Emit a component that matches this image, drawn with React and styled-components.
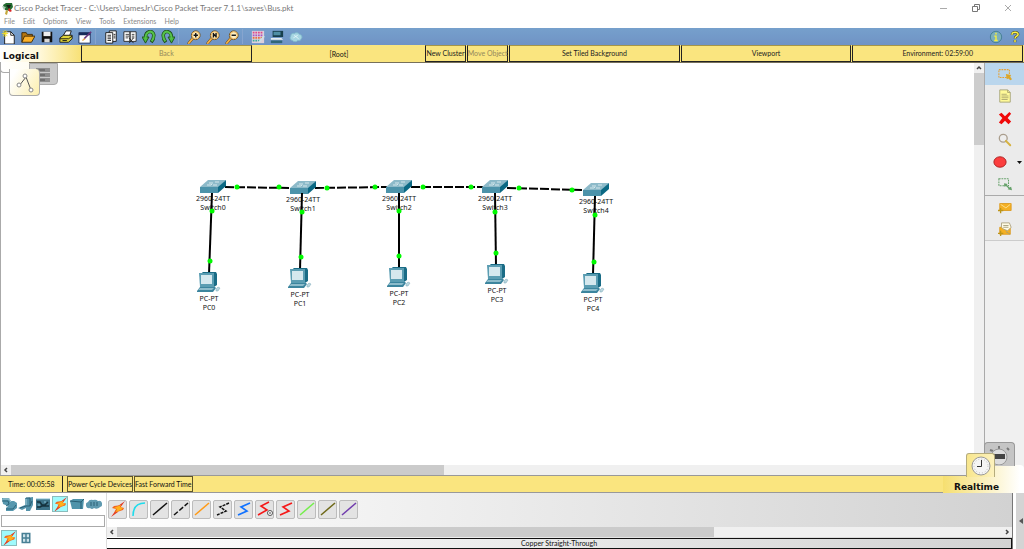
import React from "react"
import styled, { createGlobalStyle } from "styled-components"

const switches = [
    { name: "Switch0", x: 213, y: 124 },
    { name: "Switch1", x: 303, y: 125 },
    { name: "Switch2", x: 399, y: 124 },
    { name: "Switch3", x: 495, y: 124 },
    { name: "Switch4", x: 596, y: 127 },
]

const pcs = [
    { name: "PC0", x: 209, y: 220 },
    { name: "PC1", x: 300, y: 216 },
    { name: "PC2", x: 399, y: 215 },
    { name: "PC3", x: 497, y: 212 },
    { name: "PC4", x: 593, y: 221 },
]

const trunks = [
    [225, 124, 290, 125],
    [315, 125, 387, 124],
    [411, 124, 483, 124],
    [507, 125, 584, 127],
]

const drops = [
    [212, 130, 209, 211],
    [302, 130, 300, 207],
    [399, 130, 399, 206],
    [495, 130, 496, 203],
    [595, 133, 593, 212],
]

const ports = [
    [237, 124], [279, 124], [327, 125], [375, 124], [423, 124], [471, 124], [519, 125], [572, 127],
    [212, 148], [210, 198], [302, 149], [301, 194], [399, 148], [399, 193],
    [495, 149], [496, 190], [595, 152], [594, 199],
]

const cables = [
    { name: "Automatic", kind: "auto" },
    { name: "Console", kind: "arc", color: "#1fdcec" },
    { name: "Copper Straight-Through", kind: "line", color: "#111" },
    { name: "Copper Cross-Over", kind: "dash", color: "#111" },
    { name: "Fiber", kind: "line", color: "#ff9a16" },
    { name: "Phone", kind: "zigdash", color: "#111" },
    { name: "Coaxial", kind: "zig", color: "#1172ff" },
    { name: "Serial DCE", kind: "clock", color: "#f51919" },
    { name: "Serial DTE", kind: "zig", color: "#f51919" },
    { name: "Octal", kind: "line", color: "#74ee4c" },
    { name: "IoT Custom", kind: "line", color: "#6e6818" },
    { name: "USB", kind: "line", color: "#713cad" },
]

/* ---------- drawings ---------- */

const Svg = ({ s = 14, children }) => (
    <svg width={s} height={s} viewBox="0 0 16 16" fill="none" aria-hidden="true">{children}</svg>
)

const Bolt = ({ s = 16 }) => (
    <Svg s={s}>
        <path d="M15 0 10 7 8 5zM1 16l5-7 2 2z" fill="#e03a26" />
        <path d="M12 4 4 5 2 7l4 1-2 4 9-3 1-2-4-1z" fill="#f4631c" />
        <path d="m11 4-5 2-2 1 3 1-1 3 5-2 2-2-3-1z" fill="#ffb01a" />
    </Svg>
)

const Magnifier = ({ mark }) => (
    <Svg>
        <path d="m7 9-5 6" stroke="#6b4712" strokeWidth="3" strokeLinecap="round" />
        <path d="m7 9-5 6" stroke="#f0b04a" strokeWidth="2" strokeLinecap="round" />
        <circle cx="10" cy="6" r="5" fill="#fdf1c8" stroke="#6b4a18" />
        <circle cx="10" cy="6" r="4" stroke="#f2b552" />
        <path d={mark} stroke="#111" strokeWidth="1.600" />
    </Svg>
)

const Arc = ({ flip }) => (
    <Svg>
        <g transform={flip ? "translate(16 0) scale(-1 1)" : undefined}>
            <path d="M4 9C4 0 13 0 13.500 6c0 3-.5 5-3 8" stroke="#1c4d18" strokeWidth="4" />
            <path d="M0 8h8l-4 7z" fill="#4cbb40" stroke="#1c4d18" />
            <path d="M4 10C4 0 13 0 13.500 6c0 3-.5 5-2.500 7" stroke="#56c24a" strokeWidth="2.400" />
        </g>
    </Svg>
)

const tools = [
    {
        name: "New", art: <Svg>
            <path d="M3 2h7l4 4v10H3z" fill="#fff" stroke="#111" />
            <path d="M10 2v4h4" stroke="#111" />
            <path d="M0 4h7M3.500 0v8M1 1l5 6M6 1 1 7" stroke="#f2df25" />
        </Svg>,
    },
    {
        name: "Open", art: <Svg>
            <path d="M1 14V3h5l1 2h6v3" fill="#b87711" stroke="#3c2604" />
            <path d="m1 14 3-7h12l-4 7z" fill="#fbb12b" stroke="#3c2604" />
        </Svg>,
    },
    {
        name: "Save", art: <Svg>
            <path d="M2 2h12v12H2z" fill="#111" />
            <path d="M4 2h8v5H4z" fill="#eee" />
            <path d="M5 10h6v4H5z" fill="#d8d8d8" />
        </Svg>,
    },
    {
        name: "Print", art: <Svg>
            <path d="m5 6 3-5h6l-2 6z" fill="#fff" stroke="#111" />
            <path d="m1 9 4-3h10v4l-4 4H1z" fill="#ded43b" stroke="#111" />
            <path d="M1 10h10l4-3M4 12h5" stroke="#111" />
        </Svg>,
    },
    {
        name: "Activity Wizard", art: <Svg>
            <path d="M1 3h13v12H1z" fill="#fff" stroke="#162a59" />
            <path d="M1 3h13v3H1z" fill="#162a59" />
            <path d="m7 10 8-8" stroke="#673378" strokeWidth="2" />
            <path d="m5 12 3-2" stroke="#e7a544" strokeWidth="1.500" />
        </Svg>,
    },
    null,
    {
        name: "Copy", art: <Svg>
            <path d="M6 1h8v12H6z" fill="#fff" stroke="#111" />
            <path d="M2 3h8v12H2z" fill="#fff" stroke="#111" />
            <path d="M4 6h4M4 8h4M4 10h4M4 12h4M11 5h2M11 7h2M11 9h2" stroke="#111" />
        </Svg>,
    },
    {
        name: "Paste", art: <Svg>
            <path d="M1 2h7v11H1zM8 2h7v11H8z" fill="#fff" stroke="#222" />
            <path d="M3 5h4M3 7h4M3 9h3M10 5h3M10 7h3M10 9h3" stroke="#333" />
            <path d="m7 9 5 6m0-6-5 6" stroke="#222" />
        </Svg>,
    },
    { name: "Undo", art: <Arc /> },
    { name: "Redo", art: <Arc flip /> },
    null,
    { name: "Zoom In", art: <Magnifier mark="M7.500 6h5M10 3.500v5" /> },
    { name: "Zoom Reset", art: <Magnifier mark="M8.500 3.500v5m3-5v5m-3-4 3 3" /> },
    { name: "Zoom Out", art: <Magnifier mark="M7.500 6h5" /> },
    null,
    {
        name: "Palette", art: <Svg>
            <path d="M1 1h14v14H1z" fill="#dccfdc" />
            <path d="M2 3h12" stroke="#e04888" strokeWidth="2" strokeDasharray="2 1" />
            <path d="M2 6h12" stroke="#b050c0" strokeWidth="2" strokeDasharray="2 1" />
            <path d="M2 9h12" stroke="#e8703c" strokeWidth="2" strokeDasharray="2 1" />
            <path d="M2 12h8" stroke="#3cae9c" strokeWidth="2" strokeDasharray="2 1" />
            <path d="m9 14 6-7" stroke="#cfe0e6" strokeWidth="2" />
        </Svg>,
    },
    {
        name: "Custom Devices", art: <Svg>
            <path d="M3 1h12v7H3z" fill="#183f4c" />
            <path d="M4 2h8v4H4z" fill="#4f8ea4" />
            <path d="M1 9h12l2 2H1z" fill="#e4ecee" />
            <path d="M1 12h13v3H1z" fill="#316779" />
        </Svg>,
    },
    {
        name: "Cloud", art: <Svg>
            <path d="M4 12a3 3 0 0 1-2-5 3 3 0 0 1 4-3 4 4 0 0 1 6 1 3 3 0 0 1 2 5 3 3 0 0 1-4 2 4 4 0 0 1-6 0z" fill="#a6d5e2" stroke="#7fb9ca" />
            <path d="m5 9 5-3M6 6l5 4" stroke="#e3f7fa" />
        </Svg>,
    },
]

const sideTools = [
    {
        name: "Select", active: true, art: <Svg>
            <path d="M1 3h12v9H1z" stroke="#e6a033" strokeWidth="1.200" strokeDasharray="2 1" />
            <path d="m9 8 6 1-1 2 2 3-2 1-2-2-2 1z" fill="#dca72c" />
        </Svg>,
    },
    {
        name: "Place Note", art: <Svg>
            <path d="M2 1h9l3 3v11H2z" fill="#fffa98" stroke="#a2a077" />
            <path d="M11 1v3h3M4 6h6M4 8h8M4 10h8M4 12h7" stroke="#aaa66f" />
        </Svg>,
    },
    {
        name: "Delete", art: <Svg>
            <path d="m1 4 3-2 4 4 5-5 2 2-4 5 4 4-3 3-4-4-4 4-3-2 4-5z" fill="#f00909" />
        </Svg>,
    },
    {
        name: "Inspect", art: <Svg>
            <circle cx="6" cy="6" r="4.500" fill="#eee" stroke="#aa9e8e" strokeWidth="1.500" />
            <path d="m9 9 5 5" stroke="#d6b240" strokeWidth="2.200" strokeLinecap="round" />
        </Svg>,
    },
    {
        name: "Draw", menu: true, art: <Svg>
            <ellipse cx="8" cy="8" rx="7" ry="6" fill="#fb3e3e" stroke="#a81b1b" />
        </Svg>,
    },
    {
        name: "Resize", art: <Svg>
            <path d="M1 2h11v8H1z" stroke="#65a169" strokeWidth="1.200" strokeDasharray="2 1" />
            <path d="m7 7 4 1-1 1 3 3 2-1 1 4-5-1 1-1-3-3-2 1z" fill="#65a169" />
        </Svg>,
    },
    {
        name: "Simple PDU", art: <Svg>
            <path d="M2 4h13v8H2z" fill="#f5b022" stroke="#dc9a20" />
            <path d="m3 5 6 4 5-4" stroke="#fbe49a" />
            <path d="M3 9v6M0 12h6" stroke="#bd9519" strokeWidth="1.500" />
        </Svg>,
    },
    {
        name: "Complex PDU", art: <Svg>
            <path d="M2 6h12v8H2z" fill="#f5b022" stroke="#dc9a20" />
            <path d="M4 1h9l2 5-4 4-5-2-2-2z" fill="#fffbe5" stroke="#aaa07e" />
            <path d="M6 4h6M6 6h6M9 11l5 3" stroke="#a39b79" />
            <path d="M3 10v6M0 13h6" stroke="#bd9519" strokeWidth="1.500" />
        </Svg>,
    },
]

const families = [
    {
        name: "Routers", art: <Svg s={16}>
            <path d="M1 2h7l2 3h3l3 2v5l-4 3H5v-3l2-2-5-2z" fill="#5797ae" />
            <path d="M1 5h6l1 3-3 2M5 13h7l3-4" stroke="#2c647a" />
            <path d="M2 3h6l2 3" stroke="#a5cbd7" />
        </Svg>,
    },
    {
        name: "Switches", art: <Svg s={16}>
            <path d="m7 2 8-1v8l-3 6H8v-3l-4 2-4-2 7-3z" fill="#5593aa" />
            <path d="M8 2h4v8M2 12l6-2h4l2-5" stroke="#2a6077" />
            <path d="M8 3v6" stroke="#a5cbd7" />
        </Svg>,
    },
    {
        name: "Hubs", art: <Svg s={16}>
            <path d="M1 3h14v11H1z" fill="#3c7288" />
            <path d="M2 6h3l2 3h3l3-3M2 11h3l2-1h7" stroke="#15323e" strokeWidth="1.500" />
            <path d="M1 3h14M9 6h2M3 9h2" stroke="#83bed1" />
        </Svg>,
    },
    { name: "Connections", active: true, art: <Bolt s={15} /> },
    {
        name: "End Devices", art: <Svg s={16}>
            <path d="m1 5 3-2h11l-1 10H3z" fill="#4e93aa" />
            <path d="m1 5 11 1 3-3M12 6v7" stroke="#285f74" />
        </Svg>,
    },
    {
        name: "Cloud", art: <Svg s={16}>
            <path d="M4 12a3 3 0 0 1-2-6 4 3 0 0 1 5-2 4 3 0 0 1 5 1 3 3 0 0 1 2 6 4 3 0 0 1-6 1 3 3 0 0 1-4 0z" fill="#5f9ab0" />
            <path d="M4 7h8M4 9h8" stroke="#2c6177" strokeDasharray="2 1" />
        </Svg>,
    },
]

function CableArt({ kind, color }) {
    if (kind === "auto") return <Bolt />
    return (
        <Svg s={16}>
            {kind === "line" && <path d="M1 14 15 2" stroke={color} strokeWidth="1.500" />}
            {kind === "dash" && <path d="M1 14 15 2" stroke={color} strokeWidth="1.500" strokeDasharray="5 2" />}
            {kind === "arc" && <path d="M2 15C2 7 6 2 14 2" stroke={color} strokeWidth="1.500" />}
            {kind === "zig" && <path d="M14 2 5 6l6 4-9 4" stroke={color} strokeWidth="1.600" />}
            {kind === "zigdash" && <path d="M14 2 5 6l6 4-9 4" stroke={color} strokeWidth="1.500" strokeDasharray="3 1" />}
            {kind === "clock" && <>
                <path d="M12 1 4 5l6 4-9 5" stroke={color} strokeWidth="1.600" />
                <circle cx="13" cy="12" r="2.500" fill="#fff" stroke="#555" />
                <path d="M12 12h2" stroke="#444" />
            </>}
        </Svg>
    )
}

const SwitchArt = () => (
    <svg width="28" height="14" viewBox="0 0 28 14" aria-hidden="true">
        <path d="M1 7 9 0h18l-7 7z" fill="#8dbac9" />
        <path d="M1 7h18v6H1z" fill="#4c93aa" />
        <path d="m19 7 8-7v6l-8 7z" fill="#0b6984" />
        <path d="M8 5h4l1-1m3-2h4M10 3h4m0 2h4" stroke="#d4e7ec" fill="none" />
    </svg>
)

const PcArt = () => (
    <svg width="24" height="20" viewBox="0 0 24 20" aria-hidden="true">
        <path d="M5 0h14l1 2v11l-3 2z" fill="#1a6c86" />
        <path d="M2 1h15v14H3z" fill="#5b9db2" />
        <path d="M4 3h11v9H4z" fill="#d5e8ee" />
        <path d="M3 15h15l1 1-3 4H0v-1z" fill="#3c859e" />
        <path d="M3 16h14l-2 2H1z" fill="#8dbccb" />
        <path d="m19 17 2-2 2 1-2 3h-2z" fill="#bcd7df" stroke="#7aa9b8" strokeWidth=".5" />
    </svg>
)

/* ---------- page ---------- */

export default function App() {
    return (
        <Window>
            <Global />
            <TitleBar>
                <svg width="12" height="13" viewBox="0 0 12 13" aria-hidden="true">
                    <path d="M1 3 4 1l6 0 1 4-3 4-5-1z" fill="#236b31" />
                    <path d="M4 3h5l-2 4z" fill="#151f16" />
                    <path d="m7 6 3 3-2 1-2-2" fill="#db2626" />
                    <path d="m4 8 2 1-1 4-2-1z" fill="#c5a83c" />
                    <path d="m0 4 4 1-2 3z" fill="#a6c7b0" />
                </svg>
                <Title>Cisco Packet Tracer - C:\Users\JamesJr\Cisco Packet Tracer 7.1.1\saves\Bus.pkt</Title>
                <WinButton aria-label="Minimize"><svg width="8" height="8"><path d="M0 4.500h7" stroke="#aaa" /></svg></WinButton>
                <WinButton aria-label="Restore"><svg width="8" height="8" fill="none" stroke="#777"><path d="M.5 2.500h5v5h-5zM2.500 2V.5h5v5H6" /></svg></WinButton>
                <WinButton aria-label="Close"><svg width="8" height="8"><path d="m1 1 6 6m0-6-6 6" stroke="#aaa" /></svg></WinButton>
            </TitleBar>

            <MenuBar>
                {["File", "Edit", "Options", "View", "Tools", "Extensions", "Help"].map(m => <MenuItem key={m}>{m}</MenuItem>)}
            </MenuBar>

            <ToolBar>
                {tools.map((t, i) => t
                    ? <ToolButton key={t.name} aria-label={t.name}>{t.art}</ToolButton>
                    : <ToolGap key={i} />
                )}
                <Spacer />
                <ToolButton aria-label="Info">
                    <Svg>
                        <circle cx="8" cy="8" r="6.500" fill="#7cafbd" stroke="#417b91" />
                        <path d="M6 7h2v5M6 12h4M8 3v2" stroke="#f7ef3c" strokeWidth="1.600" />
                    </Svg>
                </ToolButton>
                <ToolButton aria-label="Help">
                    <Svg s={12}>
                        <path d="M4 5c0-5 9-4 8 0-.5 2-4 2-4 5m0 2v3" stroke="#4e4b20" strokeWidth="3.500" />
                        <path d="M4 5c0-5 9-4 8 0-.5 2-4 2-4 5m0 2v3" stroke="#fbf34a" strokeWidth="2" />
                    </Svg>
                </ToolButton>
            </ToolBar>

            <NavBar>
                <LogicalTab>Logical</LogicalTab>
                <NavButton $grow={171} disabled>Back</NavButton>
                <NavLabel $grow={175}>[Root]</NavLabel>
                <NavButton $grow={39}>New Cluster</NavButton>
                <NavButton $grow={40} disabled>Move Object</NavButton>
                <NavButton $grow={171}>Set Tiled Background</NavButton>
                <NavButton $grow={171}>Viewport</NavButton>
                <NavButton $grow={171}>Environment: 02:59:00</NavButton>
            </NavBar>

            <Main>
                <View>
                    <Canvas>
                        <Links>
                            {trunks.map(([a, b, c, d]) => <line key={a} x1={a} y1={b} x2={c} y2={d} stroke="#000" strokeWidth="2" strokeDasharray="9 2" />)}
                        </Links>
                        {switches.map(n => (
                            <Node key={n.name} style={{ left: n.x, top: n.y }}>
                                <SwitchArt />
                                <NodeText>2960-24TT<br />{n.name}</NodeText>
                            </Node>
                        ))}
                        <Links>
                            {drops.map(([a, b, c, d]) => <line key={a} x1={a} y1={b} x2={c} y2={d} stroke="#000" strokeWidth="2" />)}
                            {ports.map(([x, y]) => <circle key={x + "-" + y} cx={x} cy={y} r="2.500" fill="#00fa00" />)}
                        </Links>
                        {pcs.map(n => (
                            <Node key={n.name} $pc style={{ left: n.x, top: n.y }}>
                                <PcArt />
                                <NodeText>PC-PT<br />{n.name}</NodeText>
                            </Node>
                        ))}
                    </Canvas>
                    <VScroll>
                        <Arrow dir="up" />
                        <VThumb />
                    </VScroll>
                    <HScroll>
                        <Arrow dir="left" />
                        <HThumb $size="44%" />
                    </HScroll>
                </View>
                <SideBar>
                    <SideTools>
                        {sideTools.map((t, i) => (
                            <React.Fragment key={t.name}>
                                {i === 6 && <Rule />}
                                <SideButton aria-label={t.name} $active={t.active} $menu={t.menu}>
                                    {t.art}
                                    {t.menu && <svg width="5" height="3" aria-hidden="true"><path d="M0 0h5L2.500 3z" fill="#111" /></svg>}
                                </SideButton>
                            </React.Fragment>
                        ))}
                    </SideTools>
                </SideBar>
                <LogicalCorner>
                    <PhysicalTab aria-label="Physical workspace">
                        <svg width="18" height="18" aria-hidden="true">
                            <path d="M2 2h14v4H2zM2 7h14v4H2zM2 12h14v4H2z" fill="#8f8f8f" />
                            <path d="M2 4h9M2 9h9M2 14h9" stroke="#707070" strokeWidth="2" />
                        </svg>
                    </PhysicalTab>
                    <LogicalIcon aria-label="Logical workspace">
                        <svg width="20" height="22" fill="#fff" stroke="#888" aria-hidden="true">
                            <path d="m4 15 7-9 5 13" fill="none" stroke="#555" />
                            <circle cx="4" cy="14" r="2" />
                            <circle cx="10" cy="5" r="2" />
                            <circle cx="16" cy="19" r="2" />
                        </svg>
                    </LogicalIcon>
                </LogicalCorner>
            </Main>

            <TimeBar>
                <Clock>Time: 00:05:58</Clock>
                <TimeButton>Power Cycle Devices</TimeButton>
                <TimeButton>Fast Forward Time</TimeButton>
                <RealtimeTab>Realtime</RealtimeTab>
                <SimulationIcon aria-label="Simulation">
                    <svg width="28" height="20" aria-hidden="true">
                        <path d="M14 1v3M5 5l3 1M22 3l2 2" stroke="#777" strokeWidth="2" />
                        <circle cx="14" cy="12" r="8" fill="#ddd" stroke="#999" />
                        <path d="M9 9h11v5H9z" fill="#444" />
                    </svg>
                </SimulationIcon>
                <RealtimeIcon aria-label="Realtime">
                    <svg width="20" height="20" fill="none" aria-hidden="true">
                        <circle cx="10" cy="10" r="9" fill="#f5f5f5" stroke="#999" />
                        <circle cx="10" cy="10" r="7" stroke="#bbb" strokeDasharray="1 2" />
                        <path d="M10.500 4v6.500H6" stroke="#333" />
                    </svg>
                </RealtimeIcon>
            </TimeBar>

            <Bottom>
                <Picker>
                    <IconRow>
                        {families.map(f => <FamilyButton key={f.name} aria-label={f.name} $active={f.active}>{f.art}</FamilyButton>)}
                    </IconRow>
                    <Search aria-label="Search devices" />
                    <IconRow>
                        <FamilyButton aria-label="Connections" $active><Bolt s={15} /></FamilyButton>
                        <FamilyButton aria-label="Structured cabling">
                            <Svg s={12}>
                                <path d="M2 1h12v14H2z" fill="#477f94" />
                                <path d="M4 3h3v4H4zM9 3h3v4H9zM4 9h3v4H4zM9 9h3v4H9z" fill="#cfe3ea" />
                            </Svg>
                        </FamilyButton>
                    </IconRow>
                </Picker>
                <CablePanel>
                    <CableRow>
                        {cables.map(c => <CableButton key={c.name} aria-label={c.name}><CableArt {...c} /></CableButton>)}
                    </CableRow>
                    <HScroll>
                        <Arrow dir="left" />
                        <HThumb $size="66%" />
                        <Spacer />
                        <Arrow dir="right" />
                    </HScroll>
                    <Caption>Copper Straight-Through</Caption>
                </CablePanel>
                <Drawer aria-label="Show events"><svg width="5" height="6" aria-hidden="true"><path d="M4 0v6L0 3z" fill="#555" /></svg></Drawer>
            </Bottom>
        </Window>
    )
}

const arrows = { up: "M3 6l2-2 2 2", left: "M6 3 4 5l2 2", right: "M4 3l2 2-2 2" }

function Arrow({ dir }) {
    return (
        <ArrowButton aria-label={"Scroll " + dir}>
            <svg width="10" height="10" aria-hidden="true"><path d={arrows[dir]} fill="none" stroke="#444" strokeWidth="1.500" /></svg>
        </ArrowButton>
    )
}

const Global = createGlobalStyle`
*{
    box-sizing: border-box;
}
body{
    margin: 0;
    background: #fff;
    font-family: Lato, "Open Sans", sans-serif;
    color: #111;
}
button{
    font: inherit;
    color: inherit;
    padding: 0;
    margin: 0;
    border: 0;
    background: none;
    white-space: nowrap;
}
svg{
    display: block;
    flex: none;
}
`

const Window = styled.div`
display: flex;
flex-direction: column;
min-height: 100vh;
overflow: hidden;
font-size: 7px;
line-height: 9px;
`

const TitleBar = styled.header`
display: flex;
align-items: center;
height: 16px;
padding-left: 2px;
`

const Title = styled.h1`
flex: 1;
margin: 0;
font-size: 8px;
font-weight: 400;
line-height: 12px;
color: #777;
`

const WinButton = styled.button`
display: flex;
align-items: center;
justify-content: center;
width: 32px;
height: 14px;
`

const MenuBar = styled.nav`
display: flex;
gap: 8px;
height: 12px;
padding-left: 4px;
`

const MenuItem = styled.button`
height: 10px;
color: #888;
`

const ToolBar = styled.div`
display: flex;
align-items: center;
gap: 1px;
height: 17px;
background: linear-gradient(#76a0cc, #7093c5);
`

const ToolButton = styled.button`
display: flex;
align-items: center;
justify-content: center;
width: 18px;
height: 16px;
`

const ToolGap = styled.span`
width: 6px;
height: 15px;
border-left: 1px solid #86a5cf;
`

const Spacer = styled.span`
flex: 1;
`

const NavBar = styled.div`
display: flex;
height: 18px;
background: #fae57f;
border-bottom: 1px solid #77705a;
`

const LogicalTab = styled.h2`
flex: none;
width: 81px;
margin: 0;
padding: 5px 3px 0;
font-family: "DejaVu Sans", sans-serif;
font-size: 9px;
line-height: 12px;
background: linear-gradient(90deg, #fff, #fff8d8 50%, #f8e176);
`

const NavButton = styled.button`
flex: ${p => p.$grow} 1 0;
min-width: 0;
margin-right: 1px;
border: 1px solid #222;
border-top-color: #a59549;
color: ${p => p.disabled ? "#958a5c" : "#222"};
`

const NavLabel = styled.div`
flex: ${p => p.$grow} 1 0;
padding-top: 5px;
text-align: center;
`

const Main = styled.main`
position: relative;
flex: 1;
display: flex;
`

const View = styled.div`
flex: 1;
display: grid;
grid-template-columns: 1fr 10px;
grid-template-rows: 1fr 10px;
border-left: 1px solid #aaa;
`

/* nodes and links share this plane's coordinates */
const Canvas = styled.div`
position: relative;
overflow: hidden;
min-height: 402px;
margin-left: -1px;
`

const Links = styled.svg`
position: absolute;
inset: 0;
width: 100%;
height: 100%;
`

const Node = styled.div`
position: absolute;
display: flex;
flex-direction: column;
align-items: center;
gap: ${p => p.$pc ? 2 : 0}px;
width: 60px;
margin: ${p => p.$pc ? -11 : -7}px 0 0 -30px;
`

const NodeText = styled.span`
font-family: "Noto Sans", sans-serif;
text-align: center;
white-space: nowrap;
`

const VScroll = styled.div`
background: #f0f0f0;
`

const VThumb = styled.div`
height: 18%;
background: #cdcdcd;
`

const HScroll = styled.div`
grid-column: 1 / -1;
display: flex;
height: 10px;
background: #f0f0f0;
`

const HThumb = styled.div`
width: ${p => p.$size};
background: #cbcbcb;
`

const ArrowButton = styled.button`
display: block;
width: 10px;
height: 10px;
`

const SideBar = styled.aside`
width: 40px;
background: #f0f0f0;
border-left: 1px solid #aaa;
`

const SideTools = styled.div`
background: #ebebeb;
border-bottom: 1px solid #ccc;
`

const SideButton = styled.button`
display: flex;
align-items: center;
justify-content: ${p => p.$menu ? "flex-end" : "center"};
gap: ${p => p.$menu ? 10 : 0}px;
width: 100%;
height: 22px;
padding-right: ${p => p.$menu ? 2 : 0}px;
background: ${p => p.$active ? "#bad6ed" : "none"};
`

const Rule = styled.hr`
margin: 0;
border: 0;
border-top: 1px solid #aaa;
`

/* white lip that joins the Logical heading to its tab */
const LogicalCorner = styled.div`
position: absolute;
top: -1px;
left: 0;
width: 29px;
height: 11px;
background: linear-gradient(90deg, #fff, #fffdf2);
border: 1px solid #aaa;
border-width: 0 0 1px 1px;
border-radius: 0 0 0 4px;
`

const PhysicalTab = styled.button`
position: absolute;
top: 1px;
left: 28px;
display: flex;
justify-content: flex-end;
width: 29px;
height: 22px;
padding: 2px 5px;
background: #cacaca;
border: 1px solid #aaa;
border-radius: 0 0 4px 4px;
`

const LogicalIcon = styled.button`
position: absolute;
top: 7px;
left: 8px;
display: flex;
align-items: center;
justify-content: center;
width: 31px;
height: 27px;
background: linear-gradient(120deg, #fff 15%, #fcefae);
border: 1px solid #aaa;
border-top: 0;
border-radius: 0 4px 4px 4px;
`

const TimeBar = styled.div`
position: relative;
display: flex;
height: 18px;
background: #fae57f;
border-top: 1px solid #999;
border-bottom: 1px solid #999;
`

const Clock = styled.div`
width: 63px;
padding: 4px 0 0 8px;
margin-right: 4px;
border-right: 1px solid #222;
`

const TimeButton = styled.button`
margin-right: 1px;
border: 1px solid #5e552b;
`

const RealtimeTab = styled.h2`
position: absolute;
right: 0;
bottom: -1px;
width: 81px;
height: 28px;
margin: 0;
padding: 16px 0 0 11px;
font-family: "DejaVu Sans", sans-serif;
font-size: 9px;
line-height: 12px;
background: linear-gradient(90deg, #f6df70, #fff 95%);
border-radius: 0 4px 0 0;
clip-path: polygon(0 11px, 24px 11px, 24px 0, 100% 0, 100% 100%, 0 100%);
`

const SimulationIcon = styled.button`
position: absolute;
right: 9px;
bottom: 26px;
width: 31px;
height: 24px;
background: #c5c5c5;
border: 1px solid #999;
border-bottom: 0;
border-radius: 4px 4px 0 0;
`

const RealtimeIcon = styled.button`
position: absolute;
right: 29px;
bottom: 15px;
display: flex;
align-items: center;
justify-content: center;
width: 29px;
height: 24px;
background: linear-gradient(90deg, #f8e68d, #fdf2bd);
border: 1px solid #b5ac7d;
border-bottom: 0;
border-radius: 3px 3px 0 0;
`

const Bottom = styled.footer`
display: flex;
height: 56px;
background: #fff;
`

const Picker = styled.div`
display: flex;
flex-direction: column;
justify-content: space-between;
width: 107px;
padding: 3px 1px;
border-right: 1px solid #ddd;
`

const IconRow = styled.div`
display: flex;
gap: 1px;
`

const FamilyButton = styled.button`
display: flex;
align-items: center;
justify-content: center;
width: 16px;
height: 16px;
background: ${p => p.$active ? "#9ffafc" : "none"};
outline: ${p => p.$active ? "1px solid #8bbcbc" : "none"};
outline-offset: -1px;
`

const Search = styled.input`
width: 104px;
height: 12px;
padding: 0 2px;
border: 1px solid #aaa;
background: #fff;
font: inherit;
`

const CablePanel = styled.div`
flex: 1;
display: flex;
flex-direction: column;
min-width: 0;
background: linear-gradient(90deg, #fff, #d2d2d2);
border-right: 1px solid #777;
`

const CableRow = styled.div`
flex: 1;
display: flex;
align-items: center;
gap: 2px;
padding: 0 0 2px 1px;
`

const CableButton = styled.button`
display: flex;
align-items: center;
justify-content: center;
width: 19px;
height: 19px;
background: #e3e3e3;
border: 1px solid #bcbcbc;
border-radius: 2px;
`

const Caption = styled.div`
height: 11px;
margin-top: 1px;
border: 1px solid #111;
border-left: 0;
text-align: center;
`

const Drawer = styled.button`
display: flex;
align-items: center;
justify-content: flex-end;
width: 8px;
margin-left: 3px;
background: #d4d4d4;
`
